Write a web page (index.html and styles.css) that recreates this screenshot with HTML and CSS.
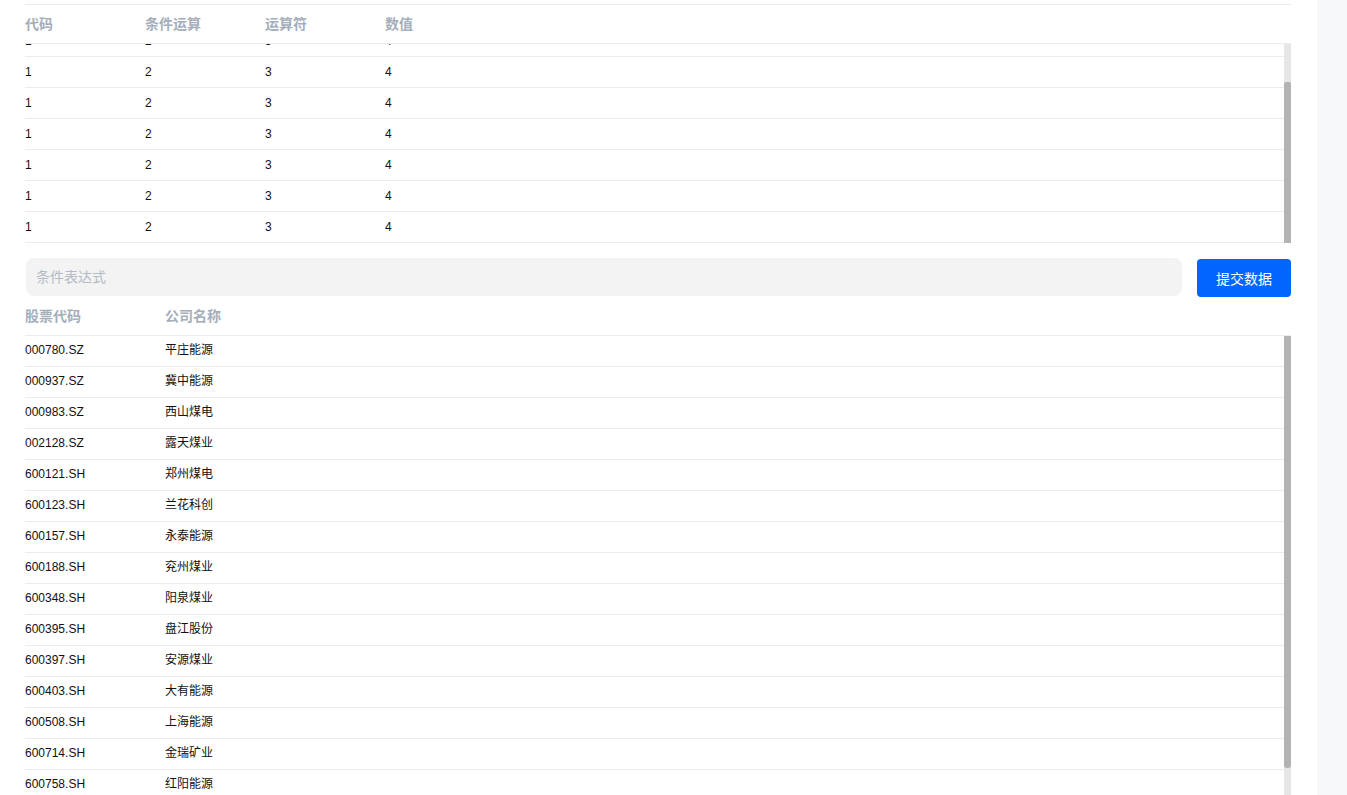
FILE: index.html
```html
<!DOCTYPE html>
<html lang="zh-CN">
<head>
<meta charset="utf-8">
<title>条件筛选</title>
<link rel="stylesheet" href="styles.css">
</head>
<body>
<div class="page">
  <main class="main">
    <section class="grid grid-cond">
      <div class="thead">
        <div class="cell">代码</div>
        <div class="cell">条件运算</div>
        <div class="cell">运算符</div>
        <div class="cell">数值</div>
      </div>
      <div class="tbody-wrap tbody-cond">
        <div class="tbody" id="condBody">
          <div class="row"><div class="cell">1</div><div class="cell">2</div><div class="cell">3</div><div class="cell">4</div></div>
          <div class="row"><div class="cell">1</div><div class="cell">2</div><div class="cell">3</div><div class="cell">4</div></div>
          <div class="row"><div class="cell">1</div><div class="cell">2</div><div class="cell">3</div><div class="cell">4</div></div>
          <div class="row"><div class="cell">1</div><div class="cell">2</div><div class="cell">3</div><div class="cell">4</div></div>
          <div class="row"><div class="cell">1</div><div class="cell">2</div><div class="cell">3</div><div class="cell">4</div></div>
          <div class="row"><div class="cell">1</div><div class="cell">2</div><div class="cell">3</div><div class="cell">4</div></div>
          <div class="row"><div class="cell">1</div><div class="cell">2</div><div class="cell">3</div><div class="cell">4</div></div>
          <div class="row"><div class="cell">1</div><div class="cell">2</div><div class="cell">3</div><div class="cell">4</div></div>
        </div>
        <div class="track track-end"><div class="thumb thumb-cond"></div></div>
      </div>
    </section>

    <form class="expr-form" onsubmit="return false;">
      <input class="expr-input" type="text" placeholder="条件表达式">
      <button class="submit-btn" type="button">提交数据</button>
    </form>

    <section class="grid grid-stock">
      <div class="thead">
        <div class="cell">股票代码</div>
        <div class="cell">公司名称</div>
      </div>
      <div class="tbody-wrap tbody-stock">
        <div class="tbody">
          <div class="row"><div class="cell">000780.SZ</div><div class="cell">平庄能源</div></div>
          <div class="row"><div class="cell">000937.SZ</div><div class="cell">冀中能源</div></div>
          <div class="row"><div class="cell">000983.SZ</div><div class="cell">西山煤电</div></div>
          <div class="row"><div class="cell">002128.SZ</div><div class="cell">露天煤业</div></div>
          <div class="row"><div class="cell">600121.SH</div><div class="cell">郑州煤电</div></div>
          <div class="row"><div class="cell">600123.SH</div><div class="cell">兰花科创</div></div>
          <div class="row"><div class="cell">600157.SH</div><div class="cell">永泰能源</div></div>
          <div class="row"><div class="cell">600188.SH</div><div class="cell">兖州煤业</div></div>
          <div class="row"><div class="cell">600348.SH</div><div class="cell">阳泉煤业</div></div>
          <div class="row"><div class="cell">600395.SH</div><div class="cell">盘江股份</div></div>
          <div class="row"><div class="cell">600397.SH</div><div class="cell">安源煤业</div></div>
          <div class="row"><div class="cell">600403.SH</div><div class="cell">大有能源</div></div>
          <div class="row"><div class="cell">600508.SH</div><div class="cell">上海能源</div></div>
          <div class="row"><div class="cell">600714.SH</div><div class="cell">金瑞矿业</div></div>
          <div class="row"><div class="cell">600758.SH</div><div class="cell">红阳能源</div></div>
          <div class="row"><div class="cell">600971.SH</div><div class="cell">恒源煤电</div></div>
        </div>
        <div class="track"><div class="thumb thumb-stock"></div></div>
      </div>
    </section>
  </main>
  <aside class="side"></aside>
</div>
<script src="script.js"></script>
</body>
</html>
```

FILE: styles.css
```css
html, body {
  margin: 0;
  padding: 0;
  height: 100%;
  overflow: hidden;
  background: #ffffff;
}

body {
  font-family: "Liberation Sans", Arial, "Noto Sans CJK SC", sans-serif;
  font-size: 12px;
  color: #111111;
}

.page {
  display: flex;
  height: 100%;
}

.main {
  width: 1317px;
  box-sizing: border-box;
  padding: 4px 26px 0 25px;
  flex: none;
}

.side {
  flex: 1;
  background: #f7f8fa;
}

.thead {
  display: flex;
  align-items: center;
  height: 38px;
  border-bottom: 1px solid #ebebeb;
  color: #a4aeba;
  font-weight: bold;
  font-size: 14px;
}

.thead .cell {
  line-height: 16px;
}

.grid-cond {
  border-top: 1px solid #ebebeb;
}

.tbody-wrap {
  display: flex;
}

.tbody {
  flex: 1;
  min-width: 0;
  overflow: hidden;
}

.track {
  width: 7px;
  flex: none;
  background: #e6e6e6;
  display: flex;
  flex-direction: column;
}

.track-end {
  justify-content: flex-end;
}

.thumb {
  background: #b3b3b3;
  border-radius: 2px 2px 0 0;
}

.thumb-cond {
  height: 161px;
}

.thumb-stock {
  height: 432px;
  border-radius: 0 0 3px 3px;
}

.tbody-cond {
  height: 199px;
}

.tbody-stock {
  height: 463px;
}

.row {
  display: flex;
  align-items: center;
  height: 30px;
  border-bottom: 1px solid #ebebeb;
}

.row .cell {
  line-height: 14px;
}

.grid-stock .row .cell {
  padding-bottom: 2px;
}

.grid-cond .cell {
  width: 120px;
  flex: none;
}

.grid-stock .cell {
  width: 140px;
  flex: none;
}

.expr-form {
  display: flex;
  align-items: flex-start;
  gap: 15px;
  margin: 15px 0 0 0;
  height: 39px;
}

.expr-input {
  flex: 1;
  height: 38px;
  margin: 0 0 0 1px;
  box-sizing: border-box;
  border: none;
  outline: none;
  border-radius: 8px;
  background: #f3f3f3;
  padding: 0 10px;
  font-family: "Liberation Sans", Arial, "Noto Sans CJK SC", sans-serif;
  font-size: 14px;
  color: #333333;
}

.expr-input::placeholder {
  color: #b3bcc6;
}

.submit-btn {
  width: 94px;
  height: 38px;
  margin-top: 1px;
  border: none;
  border-radius: 4px;
  background: #0066ff;
  color: #ffffff;
  font-family: "Liberation Sans", Arial, "Noto Sans CJK SC", sans-serif;
  font-size: 14px;
  padding: 0;
  cursor: pointer;
}
```

FILE: script.js
```js
var condBody = document.getElementById('condBody');
condBody.scrollTop = condBody.scrollHeight;
```
